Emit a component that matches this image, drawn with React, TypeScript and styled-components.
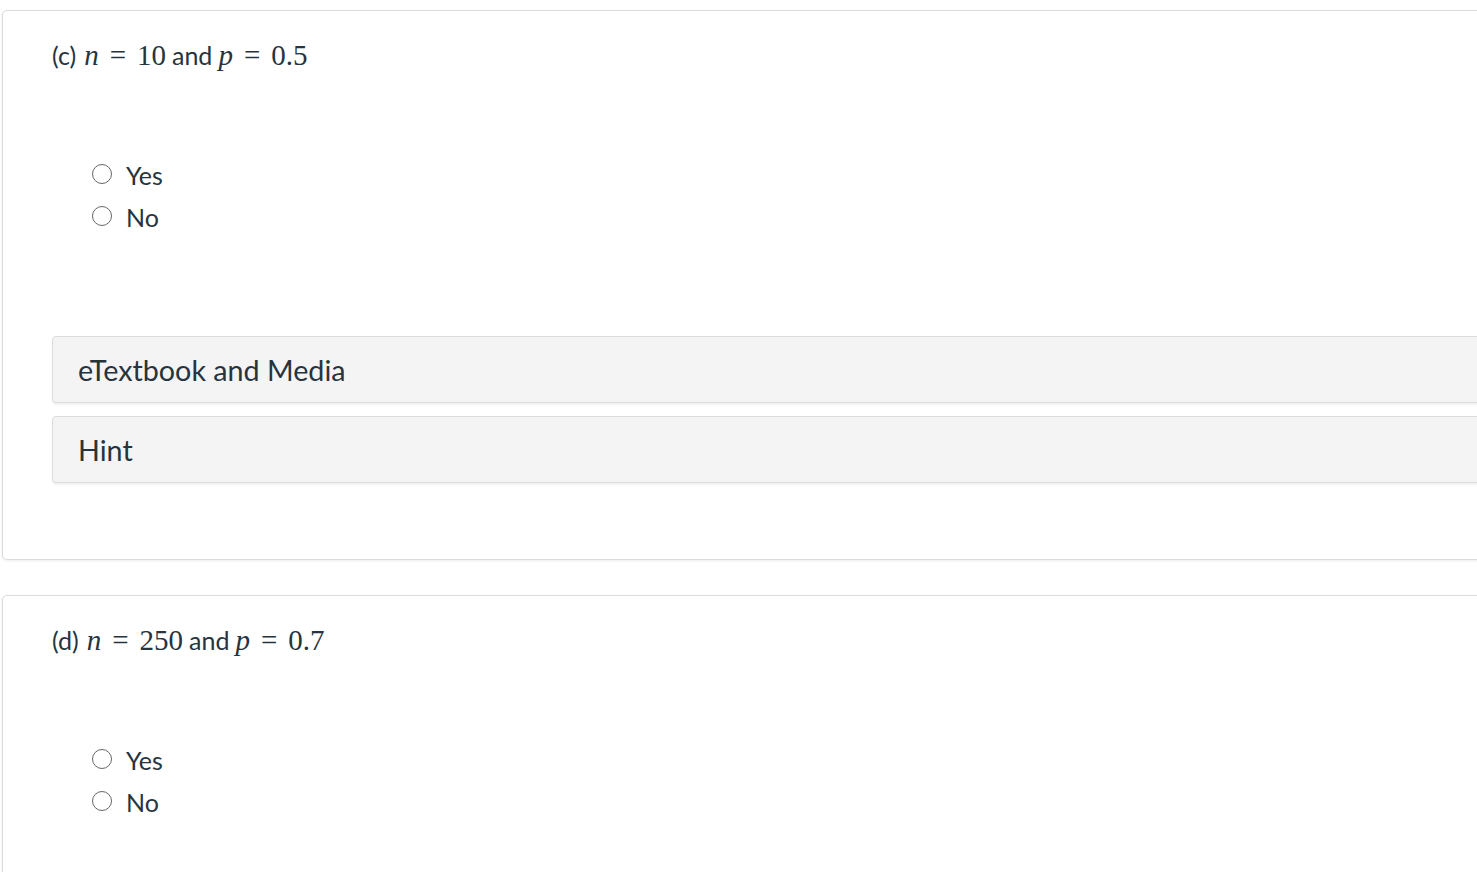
import React from "react";
import styled, { createGlobalStyle } from "styled-components";

const GlobalStyle = createGlobalStyle`
  html, body {
    margin: 0;
    padding: 0;
    background: #ffffff;
    overflow: hidden;
  }
  body {
    font-family: Lato, "Open Sans", "Liberation Sans", sans-serif;
    color: #27343e;
  }
`;

const Page = styled.div`
  display: flex;
  flex-direction: column;
  gap: 35px;
  padding: 10px 0 0 2px;
  width: 1600px;
`;

const Card = styled.section`
  width: 1560px;
  box-sizing: border-box;
  border: 1px solid #dcdcdc;
  border-radius: 5px;
  box-shadow: 0 1px 3px rgba(0, 0, 0, 0.08);
  background: #ffffff;
  padding: 26px 49px 76px 49px;
`;

const Question = styled.div`
  font-size: 25px;
  line-height: 36px;
  white-space: nowrap;
  display: flex;
  align-items: baseline;
`;

const Label = styled.span`
  margin-right: 8px;
`;

const MathVar = styled.span`
  font-family: "Liberation Serif", "DejaVu Serif", serif;
  font-style: italic;
  font-size: 29px;
`;

const MathNum = styled.span`
  font-family: "Liberation Serif", "DejaVu Serif", serif;
  font-size: 29px;
`;

const Rel = styled.span`
  font-family: "Liberation Serif", "DejaVu Serif", serif;
  font-size: 29px;
  margin: 0 11px 0 11px;
`;

const Word = styled.span`
  margin: 0 6px 0 6px;
`;

const Options = styled.ul`
  list-style: none;
  margin: 81px 0 0 0;
  padding: 0 0 0 40px;
  display: flex;
  flex-direction: column;
`;

const Option = styled.li`
  display: flex;
  align-items: center;
  gap: 14px;
  height: 42px;
  font-size: 25px;
  line-height: 42px;
`;

const Radio = styled.input.attrs({ type: "radio" })`
  appearance: none;
  -webkit-appearance: none;
  margin: 0;
  width: 20px;
  height: 20px;
  box-sizing: border-box;
  border: 1.5px solid #666666;
  border-radius: 50%;
  background: #ffffff;
  position: relative;
  top: -1px;
`;

const Panels = styled.div`
  margin-top: 98px;
  display: flex;
  flex-direction: column;
  gap: 13px;
`;

const Panel = styled.div`
  background: #f4f4f4;
  border: 1px solid #dcdcdc;
  border-radius: 4px;
  box-shadow: 0 2px 2px rgba(0, 0, 0, 0.06);
  padding: 11.5px 25px;
  font-size: 28.7px;
  line-height: 42px;
  color: #27343e;
`;

type Q = { tag: string; n: string; p: string; panels: boolean; name: string };

const questions: Q[] = [
  { tag: "(c)", n: "10", p: "0.5", panels: true, name: "qc" },
  { tag: "(d)", n: "250", p: "0.7", panels: false, name: "qd" },
];

function QuestionCard({ q }: { q: Q }) {
  return (
    <Card>
      <Question>
        <Label>{q.tag}</Label>
        <MathVar>n</MathVar>
        <Rel>=</Rel>
        <MathNum>{q.n}</MathNum>
        <Word>and</Word>
        <MathVar>p</MathVar>
        <Rel>=</Rel>
        <MathNum>{q.p}</MathNum>
      </Question>
      <Options>
        <Option>
          <Radio name={q.name} />
          Yes
        </Option>
        <Option>
          <Radio name={q.name} />
          No
        </Option>
      </Options>
      {q.panels && (
        <Panels>
          <Panel>eTextbook and Media</Panel>
          <Panel>Hint</Panel>
        </Panels>
      )}
    </Card>
  );
}

export default function App() {
  return (
    <>
      <GlobalStyle />
      <Page>
        {questions.map((q) => (
          <QuestionCard key={q.name} q={q} />
        ))}
      </Page>
    </>
  );
}
